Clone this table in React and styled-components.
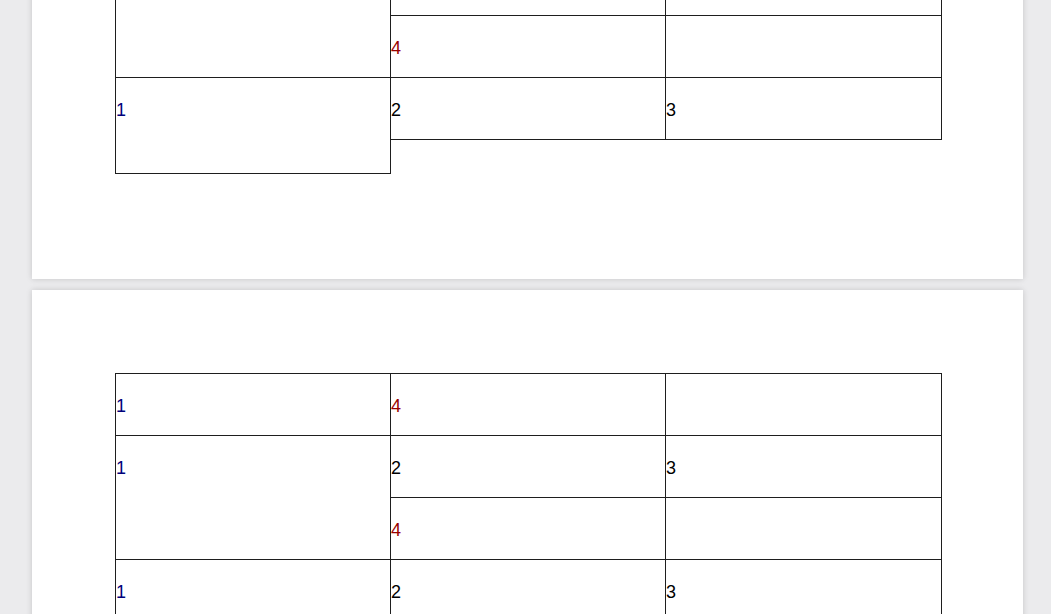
import React from 'react';
import styled, { createGlobalStyle } from 'styled-components';

const GlobalStyle = createGlobalStyle`
  html, body {
    margin: 0;
    padding: 0;
    background: #ebebed;
    overflow: hidden;
  }
  body {
    font-family: "Liberation Sans", Arial, sans-serif;
  }
`;

const Viewport = styled.div`
  height: 614px;
  overflow: hidden;
`;

// the document is scrolled down: first page's top lies above the view
const Pages = styled.div`
  display: flex;
  flex-direction: column;
  gap: 11px;
  margin-top: -192px;
`;

const Page = styled.div`
  box-sizing: border-box;
  width: 991px;
  min-height: ${(p) => p.$height}px;
  margin-left: 32px;
  padding-top: 83px;
  padding-left: 83px;
  background: #ffffff;
  box-shadow: 0 0 6px rgba(0, 0, 0, 0.16);
`;

const Grid = styled.div`
  display: grid;
  grid-template-columns: 275px 275px 276px;
  grid-auto-rows: ${(p) => p.$rows || '62px'};
  width: max-content;
  border-top: 1px solid #1e1e1e;
  border-left: 1px solid #1e1e1e;
`;

const Cell = styled.div`
  box-sizing: border-box;
  border-right: 1px solid #1e1e1e;
  border-bottom: 1px solid #1e1e1e;
  padding-top: 22px;
  font-size: 18px;
  line-height: normal;
  color: ${(p) => p.$color || '#000000'};
  grid-row: ${(p) => (p.$span ? `span ${p.$span}` : 'auto')};
  grid-column: ${(p) => p.$col || 'auto'};
`;

const BLUE = '#00007a';
const RED = '#990000';

const FirstPage = () => (
  <Page $height={471}>
    <Grid $rows="62px 62px 62px 62px 34px">
      <Cell />
      <Cell />
      <Cell />
      <Cell $span={2} />
      <Cell />
      <Cell />
      <Cell $color={RED} $col={2}>4</Cell>
      <Cell />
      <Cell $color={BLUE} $span={2}>1</Cell>
      <Cell>2</Cell>
      <Cell>3</Cell>
    </Grid>
  </Page>
);

const SecondPage = () => (
  <Page $height={471}>
    <Grid>
      <Cell $color={BLUE}>1</Cell>
      <Cell $color={RED}>4</Cell>
      <Cell />
      <Cell $color={BLUE} $span={2}>1</Cell>
      <Cell>2</Cell>
      <Cell>3</Cell>
      <Cell $color={RED} $col={2}>4</Cell>
      <Cell />
      <Cell $color={BLUE}>1</Cell>
      <Cell>2</Cell>
      <Cell>3</Cell>
    </Grid>
  </Page>
);

const App = () => (
  <Viewport>
    <GlobalStyle />
    <Pages>
      <FirstPage />
      <SecondPage />
    </Pages>
  </Viewport>
);

export default App;
